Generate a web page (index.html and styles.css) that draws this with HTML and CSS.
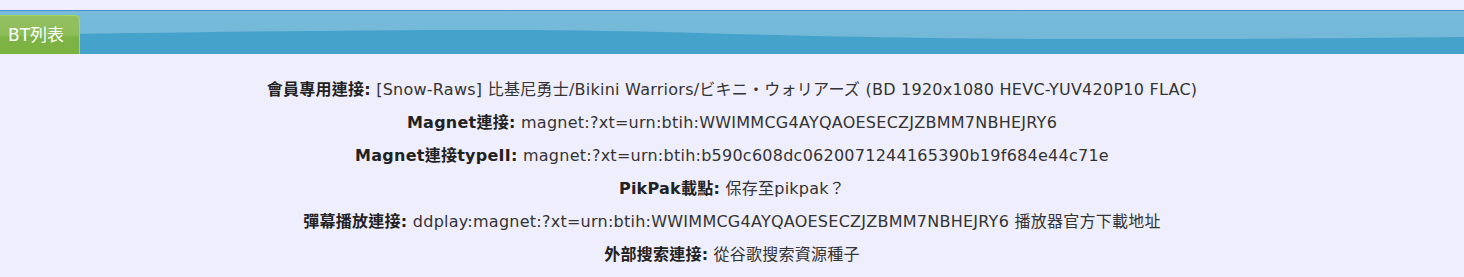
FILE: index.html
```html
<!DOCTYPE html>
<html lang="zh-Hant">
<head>
    <meta charset="UTF-8">
    <meta name="viewport" content="width=device-width, initial-scale=1.0">
    <title>BT列表</title>
    <link rel="stylesheet" href="styles.css">
</head>
<body>
    <div class="box">
        <div class="box-header">
            <svg class="wave" viewBox="0 0 1464 43" preserveAspectRatio="none">
                <path d="M0 24 C 300 20, 500 16, 700 22 S 1100 30, 1464 26 L1464 43 L0 43 Z" fill="#45a3cb"/>
            </svg>
            <div class="tab">BT列表</div>
        </div>

        <div class="links">
            <p><b>會員專用連接:</b> [Snow-Raws] 比基尼勇士/Bikini Warriors/ビキニ・ウォリアーズ (BD 1920x1080 HEVC-YUV420P10 FLAC)</p>
            <p><b>Magnet連接:</b> magnet:?xt=urn:btih:WWIMMCG4AYQAOESECZJZBMM7NBHEJRY6</p>
            <p><b>Magnet連接typeII:</b> magnet:?xt=urn:btih:b590c608dc0620071244165390b19f684e44c71e</p>
            <p><b>PikPak載點:</b> 保存至pikpak？</p>
            <p><b>彈幕播放連接:</b> ddplay:magnet:?xt=urn:btih:WWIMMCG4AYQAOESECZJZBMM7NBHEJRY6 播放器官方下載地址</p>
            <p><b>外部搜索連接:</b> 從谷歌搜索資源種子</p>
        </div>
    </div>
</body>
</html>
```

FILE: styles.css
```css
body {
    margin: 0;
    padding-top: 10px;
    background-color: #efeefd;
    font-family: 'DejaVu Sans', Verdana, 'Noto Sans CJK TC', sans-serif;
    color: #333;
}

.box-header {
    position: relative;
    height: 43px;
    border-top: 1px solid #4a90d8;
    background: linear-gradient(#78bcda, #70b6d6);
    display: flex;
    align-items: flex-end;
}

.wave {
    position: absolute;
    left: 0;
    top: 0;
    width: 100%;
    height: 100%;
}

.tab {
    position: relative;
    width: 71px;
    height: 38px;
    padding-left: 8px;
    border: 1px solid #a6d65a;
    border-left: none;
    border-bottom: none;
    border-radius: 0 5px 0 0;
    background: linear-gradient(#93c060 0%, #8dbd58 50%, #7db344 55%, #7ab242 100%);
    color: #fff;
    font-size: 17px;
    line-height: 38px;
}

.links {
    padding-top: 19px;
    text-align: center;
    font-size: 16px;
    letter-spacing: 0.25px;
}

.links p {
    margin: 0;
    height: 33px;
    line-height: 33px;
}

.links b {
    color: #222;
}
```
